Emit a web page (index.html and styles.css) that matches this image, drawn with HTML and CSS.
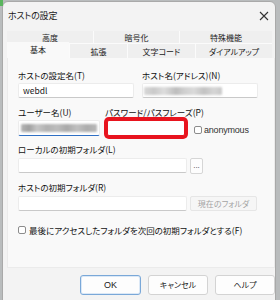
FILE: index.html
```html
<!DOCTYPE html>
<html lang="ja">
<head>
<meta charset="utf-8">
<link rel="stylesheet" href="styles.css">
</head>
<body>
<div class="bgicon"></div>
<div class="window">
  <div class="titlebar">
    <span class="title">ホストの設定</span>
    <svg class="close" width="10" height="10" viewBox="0 0 10 10"><path d="M1 1L9 9M9 1L1 9" stroke="#333" stroke-width="1.1" fill="none"/></svg>
  </div>
  <div class="tabs">
    <div class="tabrow back">
      <div class="tab t1">高度</div>
      <div class="tab t2">暗号化</div>
      <div class="tab t3">特殊機能</div>
    </div>
    <div class="tabrow front">
      <div class="tab sel w1">基本</div>
      <div class="tab w2">拡張</div>
      <div class="tab w3">文字コード</div>
      <div class="tab w4">ダイアルアップ</div>
    </div>
  </div>
  <div class="panel">
    <div class="row r1">
      <div class="field f116">
        <div class="label">ホストの設定名(T)</div>
        <div class="input">webdl</div>
      </div>
      <div class="field f116 col2">
        <div class="label">ホスト名(アドレス)(N)</div>
        <div class="input"><span class="blur b1"></span></div>
      </div>
    </div>
    <div class="row r2">
      <div class="field f82">
        <div class="label">ユーザー名(U)</div>
        <div class="input focus"><span class="blur b2"></span></div>
      </div>
      <div class="field f78 pw">
        <div class="label">パスワード/パスフレーズ(P)</div>
        <div class="input red"></div>
      </div>
      <label class="check anon"><span class="box"></span>anonymous</label>
    </div>
    <div class="row r3">
      <div class="field">
        <div class="label">ローカルの初期フォルダ(L)</div>
        <div class="inline">
          <div class="input wide"></div>
          <div class="btn dots">...</div>
        </div>
      </div>
    </div>
    <div class="row r4">
      <div class="field">
        <div class="label">ホストの初期フォルダ(R)</div>
        <div class="inline">
          <div class="input wide"></div>
          <div class="btn cur">現在のフォルダ</div>
        </div>
      </div>
    </div>
    <label class="check last"><span class="box"></span>最後にアクセスしたフォルダを次回の初期フォルダとする(F)</label>
  </div>
  <div class="buttons">
    <div class="pbtn ok">OK</div>
    <div class="pbtn">キャンセル</div>
    <div class="pbtn">ヘルプ</div>
  </div>
</div>
</body>
</html>
```
FILE: styles.css
```css
html, body {
  margin: 0;
  padding: 0;
}
body {
  width: 280px;
  height: 300px;
  overflow: hidden;
  background: #b9bcbd;
  font-family: "Noto Sans CJK JP", "Noto Sans", sans-serif;
  font-feature-settings: "palt";
  color: #1a1a1a;
  position: relative;
}
.bgicon {
  position: absolute;
  left: 0;
  top: 0;
  width: 3px;
  height: 6px;
  background: #5ab55e;
}
.window {
  margin-left: 2px;
  margin-top: 1px;
  width: 274px;
  height: 310px;
  background: #f3f3f3;
  border: 1px solid #a9a9a9;
  border-radius: 6px 6px 0 0;
  box-sizing: border-box;
}
.titlebar {
  height: 27px;
  display: flex;
  align-items: center;
  justify-content: space-between;
  padding: 0 6px 0 5px;
}
.title {
  font-size: 9px;
  line-height: 10px;
  letter-spacing: -0.2px;
}
.close {
  display: block;
}
.tabs {
  margin-left: 4px;
  margin-top: 2px;
  width: 265px;
}
.tabrow {
  display: flex;
}
.tab {
  font-size: 8px;
  text-align: center;
  box-sizing: border-box;
  color: #222;
}
.back .tab {
  height: 12px;
  line-height: 13px;
  background: #efefef;
  border-left: 1px solid #fbfbfb;
}
.back .tab:first-child { border-left: none; }
.t1 { width: 86px; }
.t2 { width: 86px; }
.t3 { width: 93px; }
.front .tab {
  height: 15px;
  line-height: 15px;
  background: #efefef;
  border-top: 1px solid #fbfbfb;
  border-left: 1px solid #fbfbfb;
}
.front .tab.sel {
  background: #f9f9f9;
  border: none;
  height: 16px;
  margin-top: -1px;
  line-height: 15px;
}
.w1 { width: 62px; }
.w2 { width: 58px; }
.w3 { width: 68px; }
.w4 { width: 77px; }
.panel {
  margin-left: 4px;
  width: 268px;
  height: 210px;
  box-sizing: border-box;
  background: #f9f9f9;
  border: 1px solid #ebebeb;
  border-top: none;
  padding: 12px 0 0 10px;
}
.row {
  display: flex;
  align-items: flex-start;
}
.label {
  font-size: 8.5px;
  line-height: 10px;
  height: 10px;
  white-space: nowrap;
  color: #111;
}
.input {
  margin-top: 3px;
  height: 15px;
  box-sizing: border-box;
  background: #ffffff;
  border: 1px solid #ececec;
  border-bottom: 1px solid #c9c9c9;
  border-radius: 2px;
  font-size: 8.5px;
  line-height: 13px;
  padding-left: 4px;
  position: relative;
}
.f116 { width: 116px; }
.f116 .input { width: 116px; }
.col2 { margin-left: 8px; }
.r2 { margin-top: 9px; }
.f82 { width: 82px; flex: none; }
.f82 .input {
  width: 82px;
  height: 16px;
}
.input.focus {
  border-bottom: 1.5px solid #2f6fc4;
}
.pw {
  margin-left: 6px;
  width: 80px;
  flex: none;
}
.pw .label { margin-left: -1px; }
.input.red {
  width: 78px;
  height: 16px;
  margin-left: 1px;
  box-shadow: 0 0 0 3px #e8141e;
  border-color: #e8141e;
}
.blur {
  position: absolute;
  top: 3px;
  height: 8px;
  filter: blur(1px);
  border-radius: 1px;
}
.b1 {
  left: 1px;
  width: 78px;
  background: linear-gradient(90deg, #d8d8d8 0, #c9c9c9 10px, #dddddd 20px, #bdbdbd 32px, #cfcfcf 40px, #dadada 50px, #c2c2c2 60px, #d6d6d6 70px, #c8c8c8 78px);
}
.b2 {
  left: 2px;
  width: 76px;
  background: linear-gradient(90deg, #b5b5b5 0, #9f9f9f 8px, #c6c6c6 16px, #b0b0b0 26px, #bdbdbd 36px, #a9a9a9 46px, #c0c0c0 56px, #acacac 66px, #b8b8b8 76px);
}
.check {
  display: flex;
  align-items: center;
  font-size: 8.5px;
  line-height: 10px;
  color: #111;
  white-space: nowrap;
}
.box {
  width: 8px;
  height: 8px;
  box-sizing: border-box;
  border: 1px solid #8c8c8c;
  border-radius: 2px;
  background: #fff;
  margin-right: 2px;
}
.anon {
  margin-left: 8px;
  margin-top: 18px;
  font-family: "Liberation Sans", Arial, sans-serif;
  font-size: 9px;
  letter-spacing: -0.2px;
  color: #333;
}
.r3 { margin-top: 8px; }
.r4 { margin-top: 8px; }
.r3 .label, .r4 .label { margin-bottom: 1px; }
.inline {
  display: flex;
  align-items: flex-start;
}
.input.wide {
  width: 169px;
  height: 15px;
}
.btn {
  margin-left: 3px;
  margin-top: 3px;
  box-sizing: border-box;
  border: 1px solid #d6d6d6;
  border-radius: 2px;
  background: #fdfdfd;
  font-size: 8px;
  text-align: center;
}
.dots {
  width: 13px;
  height: 16px;
  line-height: 14px;
  font-family: "Liberation Sans", Arial, sans-serif;
  font-size: 8px;
  color: #333;
}
.cur {
  width: 67px;
  height: 15px;
  line-height: 13px;
  background: #f6f6f6;
  border-color: #e6e6e6;
  color: #a4a4a4;
}
.last {
  margin-top: 14px;
}
.last .box { margin-right: 3px; }
.buttons {
  display: flex;
  justify-content: flex-end;
  gap: 7px;
  margin-top: 7px;
  width: 272px;
}
.pbtn {
  width: 60px;
  height: 20px;
  box-sizing: border-box;
  background: #fdfdfd;
  border: 1px solid #d3d3d3;
  border-radius: 3px;
  font-size: 8px;
  line-height: 18px;
  text-align: center;
  color: #1a1a1a;
}
.pbtn.ok {
  width: 61px;
  border: 1px solid #7aa8d8;
  box-shadow: inset 0 0 0 1px #dbe8f6;
  font-family: "Liberation Sans", Arial, sans-serif;
  font-size: 9px;
}
```
